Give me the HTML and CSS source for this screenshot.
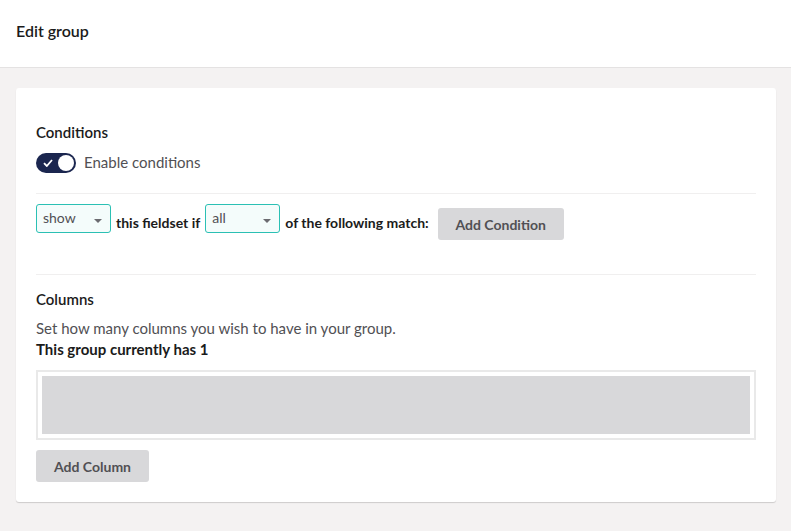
FILE: index.html
```html
<!DOCTYPE html>
<html>
<head>
<meta charset="utf-8">
<link rel="stylesheet" href="styles.css">
</head>
<body>
<header class="header">
  <h1 class="title">Edit group</h1>
</header>
<main class="content">
  <section class="card">
    <div class="section">
      <h2 class="label">Conditions</h2>
      <label class="toggle-row">
        <span class="toggle">
          <svg class="check" width="10" height="8" viewBox="0 0 10 8"><path d="M1 4.2 L3.8 7 L9 1" fill="none" stroke="#fff" stroke-width="1.8"/></svg>
          <span class="knob"></span>
        </span>
        <span class="toggle-text">Enable conditions</span>
      </label>
    </div>
    <div class="condition-row">
      <div class="select select-show"><span>show</span><span class="caret"></span></div>
      <span class="strong">this fieldset if</span>
      <div class="select select-all"><span>all</span><span class="caret"></span></div>
      <span class="strong">of the following match:</span>
      <button class="btn btn-condition">Add Condition</button>
    </div>
    <div class="section columns">
      <h2 class="label">Columns</h2>
      <p class="desc">Set how many columns you wish to have in your group.<br><strong>This group currently has 1</strong></p>
      <div class="col-box"><div class="col"></div></div>
      <button class="btn btn-column">Add Column</button>
    </div>
  </section>
</main>
</body>
</html>
```
FILE: styles.css
```css
* { box-sizing: border-box; }
html, body { margin: 0; padding: 0; }
body {
  font-family: Lato, "Open Sans", sans-serif;
  background: #f4f2f2;
  color: #1b1b1b;
  width: 791px;
  height: 531px;
  overflow: hidden;
}
.header {
  background: #fff;
  height: 68px;
  border-bottom: 1px solid #e4e2e2;
  display: flex;
  align-items: center;
  padding: 0 16px 6px;
}
.title {
  margin: 0;
  font-size: 16px;
  font-weight: 600;
  color: #1b1b1b;
}
.content {
  padding: 20px 15px 0 16px;
}
.card {
  background: #fff;
  border-radius: 3px;
  box-shadow: 0 1px 1px rgba(0,0,0,0.16);
  padding: 35px 20px 20px;
}
.label {
  margin: 0;
  font-size: 15px;
  font-weight: 600;
  line-height: 18px;
  color: #1b1b1b;
}
.toggle-row {
  display: flex;
  align-items: center;
  gap: 8px;
  margin-top: 12px;
  padding-bottom: 20px;
  border-bottom: 1px solid #f0efef;
}
.toggle {
  position: relative;
  width: 40px;
  height: 20px;
  border-radius: 10px;
  background: #1b264f;
  display: flex;
  align-items: center;
  flex: none;
}
.check {
  margin-left: 7px;
}
.knob {
  position: absolute;
  right: 2px;
  top: 2px;
  width: 16px;
  height: 16px;
  border-radius: 50%;
  background: #fff;
}
.toggle-text {
  font-size: 15px;
  line-height: 19px;
  padding-bottom: 1px;
  color: #515054;
}
.condition-row {
  display: flex;
  align-items: flex-start;
  gap: 5px;
  padding: 10px 0 34px;
  border-bottom: 1px solid #f0efef;
}
.select {
  position: relative;
  height: 29px;
  border: 1px solid #2bc0b4;
  border-radius: 3px;
  background: #f4fcfb;
  font-size: 14px;
  color: #515054;
  padding: 4px 6px;
  line-height: 17px;
}
.select-show { width: 75px; }
.select-all { width: 75px; }
.caret {
  position: absolute;
  right: 8px;
  top: 14px;
  width: 0;
  height: 0;
  border-left: 4px solid transparent;
  border-right: 4px solid transparent;
  border-top: 4px solid #6b6b70;
}
.strong {
  font-size: 14px;
  font-weight: 700;
  line-height: 29px;
  margin-top: 4px;
  color: #1b1b1b;
}
.btn {
  font-family: Lato, "Open Sans", sans-serif;
  font-size: 14px;
  font-weight: 700;
  color: #515054;
  background: #d8d8da;
  border: 0;
  border-radius: 3px;
  height: 32px;
  padding: 0;
  cursor: pointer;
  display: block;
}
.btn-condition { margin-left: 4px; width: 126px; margin-top: 4px; }
.columns { padding-top: 15px; }
.desc {
  margin: 10px 0 0;
  font-size: 15px;
  line-height: 21px;
  color: #515054;
}
.desc strong { color: #1b1b1b; font-weight: 700; }
.col-box {
  margin-top: 10px;
  border: 2px solid #e9e9e9;
  padding: 4px;
  height: 70px;
}
.col {
  background: #d8d8da;
  height: 58px;
}
.btn-column { margin-top: 10px; width: 113px; }
```
